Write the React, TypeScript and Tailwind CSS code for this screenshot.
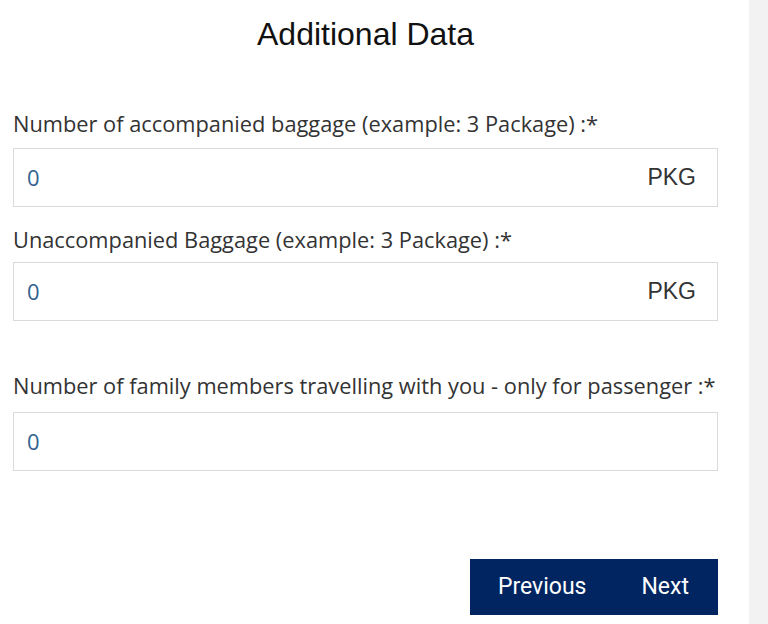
import React from "react";

const label = "text-[21.8px] leading-[28px] text-[#333333] font-['Open_Sans',sans-serif]";
const box =
  "flex h-[59px] w-full items-center justify-between border border-[#dadada] bg-white pl-[13px] pr-[21px]";
const value = "text-[22px] text-[#31628f] font-['Open_Sans',sans-serif]";
const unit = "text-[23px] text-[#333333] font-['Liberation_Sans',Arial,sans-serif]";

export default function App() {
  return (
    <div className="flex h-[624px] w-[768px] overflow-hidden bg-white">
      <main className="w-[749px] shrink-0 pl-[13px] pr-[31px]">
        <h1 className="mt-[15px] text-center text-[32px] leading-[38px] text-[#111111] font-['Liberation_Sans',Arial,sans-serif]">
          Additional Data
        </h1>

        <div className={`${label} mt-[57px]`}>Number of accompanied baggage (example: 3 Package) :*</div>
        <div className={`${box} mt-[10px]`}>
          <span className={value}>0</span>
          <span className={unit}>PKG</span>
        </div>

        <div className={`${label} mt-[19px]`}>Unaccompanied Baggage (example: 3 Package) :*</div>
        <div className={`${box} mt-[8px]`}>
          <span className={value}>0</span>
          <span className={unit}>PKG</span>
        </div>

        <div className={`${label} mt-[51px]`}>Number of family members travelling with you - only for passenger :*</div>
        <div className={`${box} mt-[12px]`}>
          <span className={value}>0</span>
        </div>

        <div className="mt-[88px] flex justify-end">
          <div className="flex h-[56px] items-center bg-[#002561] font-['Roboto',sans-serif] text-[23px] text-white">
            <button type="button" className="h-full pl-[28px] pr-[27px]">Previous</button>
            <button type="button" className="h-full pl-[28px] pr-[29px]">Next</button>
          </div>
        </div>
      </main>
      <aside className="h-full flex-1 bg-[#f2f2f2]" />
    </div>
  );
}
